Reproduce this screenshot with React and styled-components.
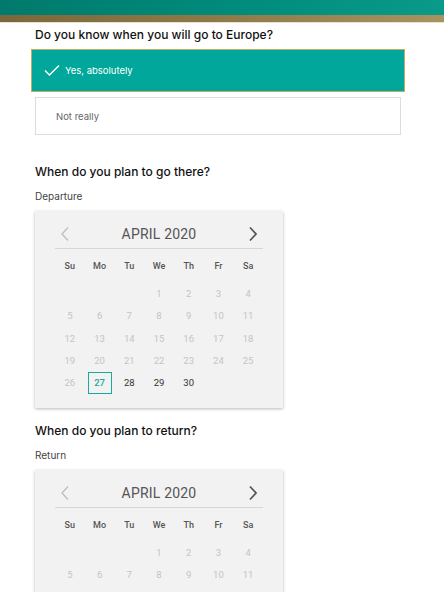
import React from 'react';
import styled, { createGlobalStyle } from 'styled-components';

const GlobalStyle = createGlobalStyle`
  * { box-sizing: border-box; }
  body {
    margin: 0;
    background: #fff;
    font-family: Inter, "Liberation Sans", sans-serif;
  }
`;

const Page = styled.div`
  width: 444px;
`;

const TopBar = styled.div`
  height: 15px;
  background: linear-gradient(90deg, #007a6c 0%, #008a7b 50%, #0a9a8a 100%);
`;

const GoldBar = styled.div`
  height: 8px;
  background: linear-gradient(90deg, #7c673a 0%, #8e7a48 50%, #a69360 100%);
  border-bottom: 1px solid #e9e2d0;
`;

const Content = styled.div`
  width: 366px;
  margin-left: 35px;
  padding-top: 4px;
`;

const Question = styled.h2`
  margin: ${(p) => p.$top || 0}px 0 0;
  font-size: 12px;
  line-height: 16px;
  font-weight: 500;
  color: #111;
`;

const Options = styled.div`
  display: flex;
  flex-direction: column;
  gap: 5px;
  margin-top: 6px;
`;

const Option = styled.div`
  display: flex;
  align-items: center;
  gap: 5px;
  font-size: 9.5px;
  ${(p) =>
    p.$selected
      ? `
    height: 43px;
    margin: 0 -4px;
    padding-left: 12px;
    background: #00a79a;
    border: 1px solid #c9a95b;
    color: #fff;
  `
      : `
    height: 38px;
    padding-left: 20px;
    background: #fff;
    border: 1px solid #dcdcdc;
    color: #666;
  `}
`;

const Label = styled.div`
  margin-top: 9px;
  font-size: 10px;
  line-height: 14px;
  color: #444;
`;

const Calendar = styled.div`
  width: 248px;
  margin-top: 8px;
  padding: 12px 20px 14px;
  background: #f2f2f2;
  box-shadow: 0 1px 3px rgba(0, 0, 0, 0.28);
  font-family: Roboto, "Liberation Sans", sans-serif;
`;

const CalHeader = styled.div`
  display: flex;
  align-items: center;
  justify-content: space-between;
  height: 22px;
  padding: 0 5px;
  margin-bottom: 3px;
`;

const Month = styled.div`
  font-size: 14px;
  color: #555;
  letter-spacing: 0.2px;
`;

const Divider = styled.div`
  height: 1px;
  background: #d6d6d6;
`;

const Grid = styled.div`
  display: grid;
  grid-template-columns: repeat(7, 1fr);
  grid-auto-rows: 22.3px;
  margin-top: ${(p) => p.$top}px;
`;

const WeekDay = styled.div`
  display: flex;
  align-items: center;
  justify-content: center;
  font-size: 9px;
  font-weight: 500;
  color: #555;
`;

const Day = styled.div`
  display: flex;
  align-items: center;
  justify-content: center;
  font-size: 9.5px;
  color: ${(p) => (p.$active ? '#333' : '#c4c4c4')};
`;

const SelectedDay = styled.div`
  width: 24px;
  height: 22px;
  display: flex;
  align-items: center;
  justify-content: center;
  border: 1.5px solid #1aa99c;
  color: #1aa99c;
  font-size: 9.5px;
  font-weight: 500;
`;

const Chevron = ({ dir, color }) => (
  <svg width="10" height="16" viewBox="0 0 10 16">
    <polyline
      points={dir === 'left' ? '8,1.5 2,8 8,14.5' : '2,1.5 8,8 2,14.5'}
      fill="none"
      stroke={color}
      strokeWidth={dir === 'left' ? 1.3 : 1.8}
    />
  </svg>
);

const CheckIcon = () => (
  <svg width="16" height="13" viewBox="0 0 16 13">
    <polyline points="1,6.5 5.5,11 15,1.5" fill="none" stroke="#fff" strokeWidth="1.5" />
  </svg>
);

const weekDays = ['Su', 'Mo', 'Tu', 'We', 'Th', 'Fr', 'Sa'];

const MonthCalendar = ({ selected }) => {
  const cells = [null, null, null];
  for (let d = 1; d <= 30; d++) cells.push(d);

  return (
    <Calendar>
      <CalHeader>
        <Chevron dir="left" color="#bdbdbd" />
        <Month>APRIL 2020</Month>
        <Chevron dir="right" color="#555" />
      </CalHeader>
      <Divider />
      <Grid $top={6}>
        {weekDays.map((w) => (
          <WeekDay key={w}>{w}</WeekDay>
        ))}
      </Grid>
      <Grid $top={5}>
        {cells.map((d, i) => (
          <Day key={i} $active={selected && d > selected}>
            {d === selected ? <SelectedDay>{d}</SelectedDay> : d}
          </Day>
        ))}
      </Grid>
    </Calendar>
  );
};

export default function App() {
  return (
    <Page>
      <GlobalStyle />
      <TopBar />
      <GoldBar />
      <Content>
        <Question>Do you know when you will go to Europe?</Question>
        <Options>
          <Option $selected>
            <CheckIcon />
            Yes, absolutely
          </Option>
          <Option>Not really</Option>
        </Options>

        <Question $top={29}>When do you plan to go there?</Question>
        <Label>Departure</Label>
        <MonthCalendar selected={27} />

        <Question $top={15}>When do you plan to return?</Question>
        <Label>Return</Label>
        <MonthCalendar />
      </Content>
    </Page>
  );
}
